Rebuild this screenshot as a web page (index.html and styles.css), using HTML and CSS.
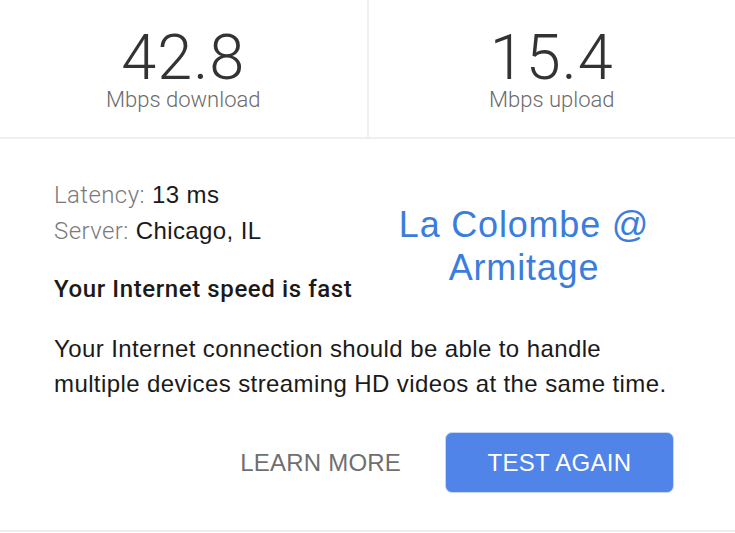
FILE: index.html
```html
<!DOCTYPE html>
<html>
<head>
<meta charset="utf-8">
<link rel="stylesheet" href="styles.css">
</head>
<body>
<div class="card">
  <div class="stats">
    <div class="stat">
      <div class="value">42.8</div>
      <div class="unit">Mbps download</div>
    </div>
    <div class="stat">
      <div class="value">15.4</div>
      <div class="unit">Mbps upload</div>
    </div>
  </div>
  <div class="details">
    <div class="info">
      <div class="meta">
        <div class="meta-row"><span class="label">Latency:</span> 13 ms</div>
        <div class="meta-row"><span class="label">Server:</span> Chicago, IL</div>
        <div class="headline">Your Internet speed is fast</div>
      </div>
      <div class="place">La Colombe @<br>Armitage</div>
    </div>
    <p class="desc">Your Internet connection should be able to handle multiple devices streaming HD videos at the same time.</p>
    <div class="actions">
      <button class="link-btn">LEARN MORE</button>
      <button class="primary-btn">TEST AGAIN</button>
    </div>
  </div>
</div>
</body>
</html>
```

FILE: styles.css
```css
html, body {
  margin: 0;
  padding: 0;
  background: #ffffff;
}
body {
  font-family: "Liberation Sans", Arial, sans-serif;
  color: #1f1f1f;
  width: 735px;
  height: 533px;
  overflow: hidden;
}
.card {
  display: flex;
  flex-direction: column;
  height: 532px;
  border-bottom: 2px solid #eeeeee;
  box-sizing: border-box;
}
.stats {
  display: flex;
  height: 139px;
  border-bottom: 2px solid #efefef;
  box-sizing: border-box;
}
.stat {
  flex: 1;
  display: flex;
  flex-direction: column;
  align-items: center;
  padding-top: 28px;
}
.stat:first-child {
  border-right: 2px solid #efefef;
}
.value {
  font-family: "Roboto", "Liberation Sans", sans-serif;
  font-weight: 300;
  font-size: 63px;
  line-height: 60px;
  color: #333333;
  letter-spacing: 1px;
}
.unit {
  font-family: "Roboto", "Liberation Sans", sans-serif;
  font-weight: 300;
  font-size: 22px;
  line-height: 24px;
  color: #6b6b6b;
}
.details {
  padding: 38px 54px 0 54px;
  flex: 1;
  display: flex;
  flex-direction: column;
}
.info {
  display: flex;
  justify-content: space-between;
}
.meta {
  display: flex;
  flex-direction: column;
}
.meta-row {
  font-size: 24px;
  line-height: 36px;
  letter-spacing: 0.4px;
  color: #1a1a1a;
}
.label {
  color: #7a7a7a;
  font-family: "Roboto", "Liberation Sans", sans-serif;
  font-weight: 300;
}
.headline {
  margin-top: 25px;
  font-size: 24px;
  line-height: 30px;
  font-family: "Roboto", "Liberation Sans", sans-serif;
  font-weight: 500;
  letter-spacing: 0.6px;
  color: #1a1a1a;
}
.place {
  width: 320px;
  text-align: center;
  color: #3b7ddd;
  font-size: 36px;
  line-height: 43px;
  letter-spacing: 0.8px;
  margin-top: 26px;
  margin-right: -3px;
}
.desc {
  margin: 27px 0 0 0;
  font-size: 24px;
  line-height: 35px;
  letter-spacing: 0.4px;
  color: #1a1a1a;
}
.actions {
  display: flex;
  justify-content: flex-end;
  align-items: center;
  margin-top: 31px;
  margin-right: 7px;
}
.link-btn {
  background: none;
  border: none;
  font-family: "Liberation Sans", Arial, sans-serif;
  font-size: 24px;
  letter-spacing: 0.2px;
  color: #6f6f6f;
  padding: 0;
  margin-right: 44px;
}
.primary-btn {
  width: 229px;
  height: 61px;
  background: #5184e9;
  border: 1px solid #c7d6f3;
  border-radius: 7px;
  color: #ffffff;
  font-family: "Liberation Sans", Arial, sans-serif;
  font-size: 24px;
  letter-spacing: 0.3px;
}
```
